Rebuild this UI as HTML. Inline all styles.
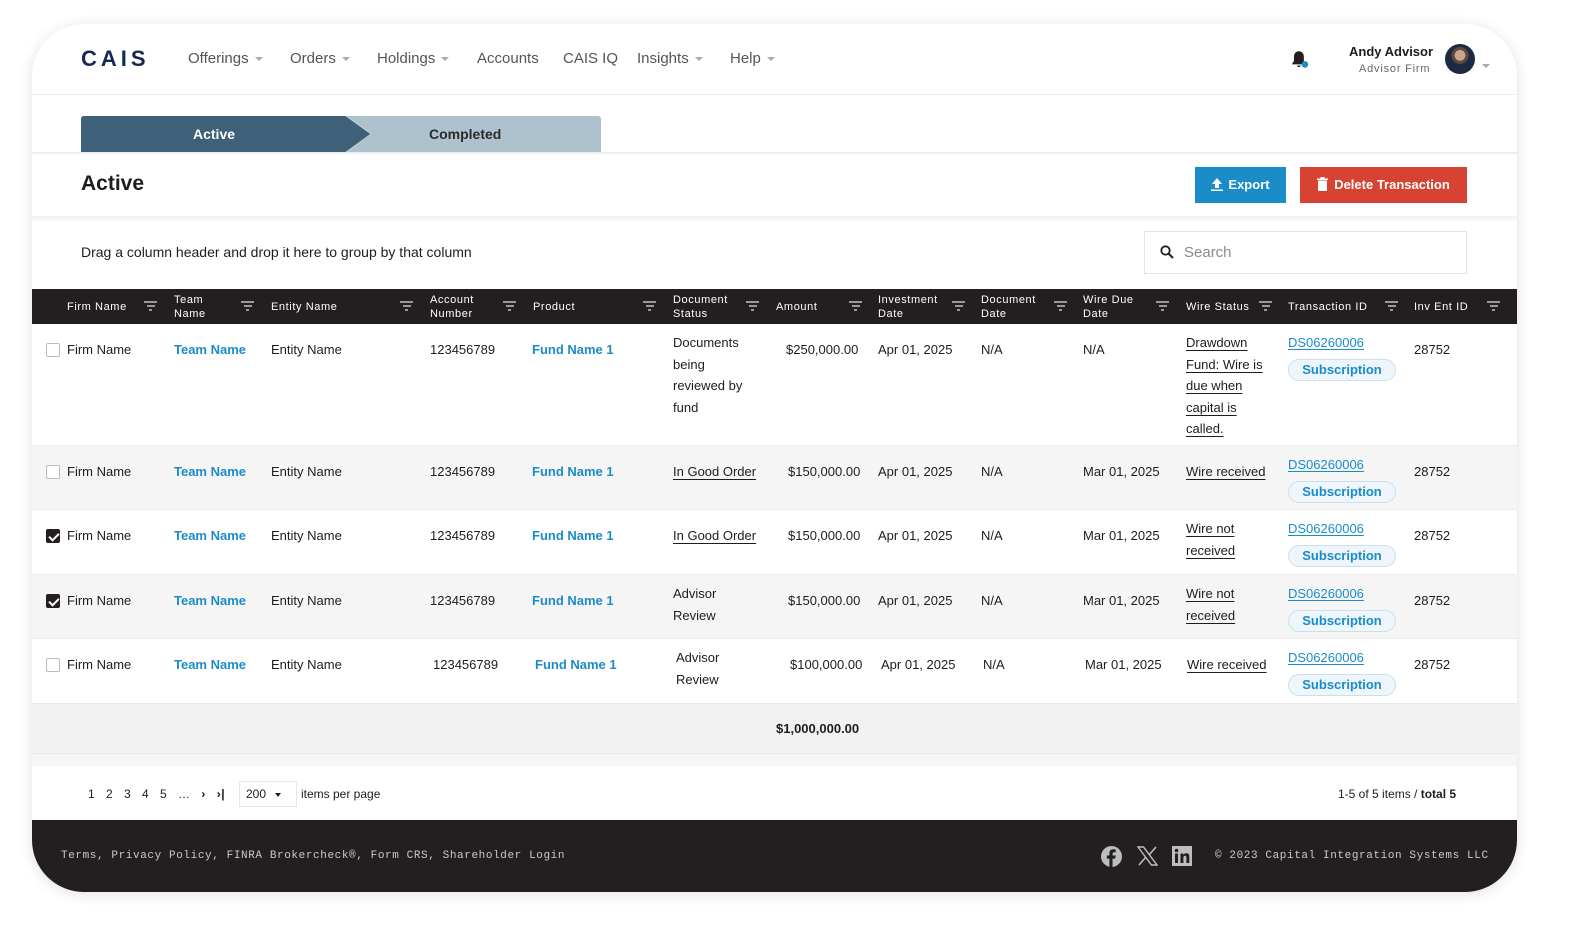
<!DOCTYPE html>
<html><head><meta charset="utf-8"><style>
*{box-sizing:border-box;margin:0;padding:0}
body{width:1591px;height:929px;background:#fff;font-family:"Liberation Sans",Arial,sans-serif;color:#1d1d1f;position:relative;overflow:hidden;font-size:13px}
.card{position:absolute;left:32px;top:24px;width:1485px;height:868px;border-radius:52px;background:#fff;box-shadow:0 2px 14px rgba(0,0,0,.12);overflow:hidden}
.a{position:absolute;white-space:nowrap}
.nav{color:#555;font-size:15px;top:49px}
.caret{display:inline-block;width:0;height:0;border-left:4px solid transparent;border-right:4px solid transparent;border-top:4px solid #aaa;vertical-align:middle;margin-left:6px}
.hdr{position:absolute;left:0;top:265px;width:1485px;height:35px;background:#231f20;color:#fff;font-size:11px;letter-spacing:.6px}
.hdr .a{line-height:14px}
.f{position:absolute;width:13px;top:12px}
.f i{display:block;height:1.5px;background:#999;margin:0 auto 2.5px}
.row{position:absolute;left:0;width:1485px}
.row .a{line-height:21.5px}
.lk{color:#1a8dc9;font-weight:bold}
.u{text-decoration:underline;text-underline-offset:3px}
.tx{color:#1a8dc9;text-decoration:underline;text-underline-offset:2px}
.badge{position:absolute;width:108px;height:22px;border:1px solid #c9e0f0;background:#eef5fb;border-radius:11px;color:#1a8dc9;font-weight:bold;text-align:center;line-height:20px;font-size:13px}
.cb{position:absolute;left:14px;width:14px;height:14px;border:1px solid #bbb;border-radius:2px;background:#fff}
.cb.on{background:#231f20;border-color:#231f20}
.cb.on:after{content:"";position:absolute;left:4px;top:1px;width:4px;height:8px;border:solid #fff;border-width:0 2px 2px 0;transform:rotate(45deg)}
</style></head><body>
<div class="card">
  <div class="a" style="left:49px;top:22px;font-size:22px;font-weight:bold;letter-spacing:4px;color:#152a52">CAIS</div>
  <div class="a nav" style="left:156px;top:26px">Offerings<span class="caret"></span></div>
  <div class="a nav" style="left:258px;top:26px">Orders<span class="caret"></span></div>
  <div class="a nav" style="left:345px;top:26px">Holdings<span class="caret"></span></div>
  <div class="a nav" style="left:445px;top:26px">Accounts</div>
  <div class="a nav" style="left:531px;top:26px">CAIS IQ</div>
  <div class="a nav" style="left:605px;top:26px">Insights<span class="caret"></span></div>
  <div class="a nav" style="left:698px;top:26px">Help<span class="caret"></span></div>
  <svg class="a" style="left:1257px;top:25px" width="22" height="22" viewBox="0 0 20 20"><path d="M9 2c-3 0-4.5 2.5-4.5 5v4L3 13v1h12v-1l-1.5-2V7C13.5 4.5 12 2 9 2z M7.5 15a1.5 1.5 0 0 0 3 0z" fill="#231f20"/><circle cx="14.5" cy="14" r="3" fill="#1a8dc9"/></svg>
  <div class="a" style="left:1317px;top:20px;font-size:13px;font-weight:bold">Andy Advisor</div>
  <div class="a" style="left:1327px;top:39px;font-size:11px;color:#666;letter-spacing:.8px">Advisor Firm</div>
  <div class="a" style="left:1413px;top:20px;width:30px;height:30px;border-radius:50%;background:radial-gradient(circle at 50% 38%,#c9a58c 0 22%,#5a4a40 23% 35%,#1e2a44 36%)"></div>
  <div class="a" style="left:1450px;top:33px"><span class="caret" style="margin:0"></span></div>
  <div class="a" style="left:0;top:70px;width:1485px;height:1px;background:#eee"></div>
  <div class="a" style="left:49px;top:92px;width:520px;height:36px;background:#adc2cc;border-radius:3px 3px 0 0"></div>
  <svg class="a" style="left:49px;top:92px" width="300" height="36"><path d="M0 3Q0 0 3 0H265L290 18L265 36H0Z" fill="#3e6079"/><path d="M265 0L290 18L265 36" fill="none" stroke="#fff" stroke-width="1" opacity=".5"/></svg>
  <div class="a" style="left:161px;top:102px;color:#fff;font-weight:bold;font-size:14px">Active</div>
  <div class="a" style="left:397px;top:102px;color:#2b2b2b;font-weight:bold;font-size:14px">Completed</div>
  <div class="a" style="left:0;top:128px;width:1485px;height:2px;background:#eee"></div>
  <div class="a" style="left:49px;top:148px;font-size:21px;font-weight:bold">Active</div>
  <div class="a" style="left:1163px;top:143px;width:91px;height:36px;background:#1a8dc9;color:#fff;font-weight:bold;font-size:13px;line-height:36px;text-align:center">
    <svg width="12" height="13" viewBox="0 0 12 13" style="vertical-align:-2px;margin-right:5px"><path d="M6 0L11 6H8V10H4V6H1Z M0 11.5H12V13H0Z" fill="#fff"/></svg>Export</div>
  <div class="a" style="left:1268px;top:143px;width:167px;height:36px;background:#d64333;color:#fff;font-weight:bold;font-size:13px;line-height:36px;text-align:center">
    <svg width="11" height="14" viewBox="0 0 11 14" style="vertical-align:-2px;margin-right:6px"><path d="M0 1.5H11V3H0Z M3.5 0H7.5V1.5H3.5Z M1 3.5H10V14H1Z" fill="#fff"/></svg>Delete Transaction</div>
  <div class="a" style="left:0;top:192px;width:1485px;height:6px;background:linear-gradient(#f0f0f0,#fff)"></div>
  <div class="a" style="left:49px;top:220px;font-size:14px">Drag a column header and drop it here to group by that column</div>
  <div class="a" style="left:1112px;top:207px;width:323px;height:43px;border:1px solid #e3e3e3;background:#fff"></div>
  <svg class="a" style="left:1128px;top:221px" width="14" height="14" viewBox="0 0 14 14"><circle cx="5.5" cy="5.5" r="4.2" fill="none" stroke="#231f20" stroke-width="1.8"/><path d="M8.5 8.5L13 13" stroke="#231f20" stroke-width="2"/></svg>
  <div class="a" style="left:1152px;top:220px;font-size:15px;color:#8a8a8a">Search</div>

  <div class="hdr">
    <div class="a" style="left:35px;top:11px">Firm Name</div><div class="f" style="left:112px"><i style="width:13px"></i><i style="width:8px"></i><i style="width:3px"></i></div>
    <div class="a" style="left:142px;top:4px">Team<br>Name</div><div class="f" style="left:209px"><i style="width:13px"></i><i style="width:8px"></i><i style="width:3px"></i></div>
    <div class="a" style="left:239px;top:11px">Entity Name</div><div class="f" style="left:368px"><i style="width:13px"></i><i style="width:8px"></i><i style="width:3px"></i></div>
    <div class="a" style="left:398px;top:4px">Account<br>Number</div><div class="f" style="left:471px"><i style="width:13px"></i><i style="width:8px"></i><i style="width:3px"></i></div>
    <div class="a" style="left:501px;top:11px">Product</div><div class="f" style="left:611px"><i style="width:13px"></i><i style="width:8px"></i><i style="width:3px"></i></div>
    <div class="a" style="left:641px;top:4px">Document<br>Status</div><div class="f" style="left:714px"><i style="width:13px"></i><i style="width:8px"></i><i style="width:3px"></i></div>
    <div class="a" style="left:744px;top:11px">Amount</div><div class="f" style="left:817px"><i style="width:13px"></i><i style="width:8px"></i><i style="width:3px"></i></div>
    <div class="a" style="left:846px;top:4px">Investment<br>Date</div><div class="f" style="left:920px"><i style="width:13px"></i><i style="width:8px"></i><i style="width:3px"></i></div>
    <div class="a" style="left:949px;top:4px">Document<br>Date</div><div class="f" style="left:1022px"><i style="width:13px"></i><i style="width:8px"></i><i style="width:3px"></i></div>
    <div class="a" style="left:1051px;top:4px">Wire Due<br>Date</div><div class="f" style="left:1124px"><i style="width:13px"></i><i style="width:8px"></i><i style="width:3px"></i></div>
    <div class="a" style="left:1154px;top:11px">Wire Status</div><div class="f" style="left:1227px"><i style="width:13px"></i><i style="width:8px"></i><i style="width:3px"></i></div>
    <div class="a" style="left:1256px;top:11px">Transaction ID</div><div class="f" style="left:1353px"><i style="width:13px"></i><i style="width:8px"></i><i style="width:3px"></i></div>
    <div class="a" style="left:1382px;top:11px">Inv Ent ID</div><div class="f" style="left:1455px"><i style="width:13px"></i><i style="width:8px"></i><i style="width:3px"></i></div>
  </div>

  <div class="row" style="top:300px;height:122px;background:#fff;border-bottom:1px solid #ececec">
    <div class="cb" style="top:19px"></div>
    <div class="a" style="left:35px;top:15px">Firm Name</div>
    <div class="a lk" style="left:142px;top:15px">Team Name</div>
    <div class="a" style="left:239px;top:15px">Entity Name</div>
    <div class="a" style="left:398px;top:15px">123456789</div>
    <div class="a lk" style="left:500px;top:15px">Fund Name 1</div>
    <div class="a" style="left:641px;top:8px">Documents<br>being<br>reviewed by<br>fund</div>
    <div class="a" style="left:754px;top:15px">$250,000.00</div>
    <div class="a" style="left:846px;top:15px">Apr 01, 2025</div>
    <div class="a" style="left:949px;top:15px">N/A</div>
    <div class="a" style="left:1051px;top:15px">N/A</div>
    <div class="a u" style="left:1154px;top:8px">Drawdown<br>Fund: Wire is<br>due when<br>capital is<br>called.</div>
    <div class="a tx" style="left:1256px;top:8px">DS06260006</div>
    <div class="badge" style="left:1256px;top:35px">Subscription</div>
    <div class="a" style="left:1382px;top:15px">28752</div>
  </div>
  <div class="row" style="top:422px;height:64px;background:#f5f5f5;border-bottom:1px solid #ececec">
    <div class="cb" style="top:19px"></div>
    <div class="a" style="left:35px;top:15px">Firm Name</div>
    <div class="a lk" style="left:142px;top:15px">Team Name</div>
    <div class="a" style="left:239px;top:15px">Entity Name</div>
    <div class="a" style="left:398px;top:15px">123456789</div>
    <div class="a lk" style="left:500px;top:15px">Fund Name 1</div>
    <div class="a u" style="left:641px;top:15px">In Good Order</div>
    <div class="a" style="left:756px;top:15px">$150,000.00</div>
    <div class="a" style="left:846px;top:15px">Apr 01, 2025</div>
    <div class="a" style="left:949px;top:15px">N/A</div>
    <div class="a" style="left:1051px;top:15px">Mar 01, 2025</div>
    <div class="a u" style="left:1154px;top:15px">Wire received</div>
    <div class="a tx" style="left:1256px;top:8px">DS06260006</div>
    <div class="badge" style="left:1256px;top:35px">Subscription</div>
    <div class="a" style="left:1382px;top:15px">28752</div>
  </div>
  <div class="row" style="top:486px;height:65px;background:#fff;border-bottom:1px solid #ececec">
    <div class="cb on" style="top:19px"></div>
    <div class="a" style="left:35px;top:15px">Firm Name</div>
    <div class="a lk" style="left:142px;top:15px">Team Name</div>
    <div class="a" style="left:239px;top:15px">Entity Name</div>
    <div class="a" style="left:398px;top:15px">123456789</div>
    <div class="a lk" style="left:500px;top:15px">Fund Name 1</div>
    <div class="a u" style="left:641px;top:15px">In Good Order</div>
    <div class="a" style="left:756px;top:15px">$150,000.00</div>
    <div class="a" style="left:846px;top:15px">Apr 01, 2025</div>
    <div class="a" style="left:949px;top:15px">N/A</div>
    <div class="a" style="left:1051px;top:15px">Mar 01, 2025</div>
    <div class="a u" style="left:1154px;top:8px">Wire not<br>received</div>
    <div class="a tx" style="left:1256px;top:8px">DS06260006</div>
    <div class="badge" style="left:1256px;top:35px">Subscription</div>
    <div class="a" style="left:1382px;top:15px">28752</div>
  </div>
  <div class="row" style="top:551px;height:64px;background:#f5f5f5;border-bottom:1px solid #ececec">
    <div class="cb on" style="top:19px"></div>
    <div class="a" style="left:35px;top:15px">Firm Name</div>
    <div class="a lk" style="left:142px;top:15px">Team Name</div>
    <div class="a" style="left:239px;top:15px">Entity Name</div>
    <div class="a" style="left:398px;top:15px">123456789</div>
    <div class="a lk" style="left:500px;top:15px">Fund Name 1</div>
    <div class="a" style="left:641px;top:8px">Advisor<br>Review</div>
    <div class="a" style="left:756px;top:15px">$150,000.00</div>
    <div class="a" style="left:846px;top:15px">Apr 01, 2025</div>
    <div class="a" style="left:949px;top:15px">N/A</div>
    <div class="a" style="left:1051px;top:15px">Mar 01, 2025</div>
    <div class="a u" style="left:1154px;top:8px">Wire not<br>received</div>
    <div class="a tx" style="left:1256px;top:8px">DS06260006</div>
    <div class="badge" style="left:1256px;top:35px">Subscription</div>
    <div class="a" style="left:1382px;top:15px">28752</div>
  </div>
  <div class="row" style="top:615px;height:64px;background:#fff">
    <div class="cb" style="top:19px"></div>
    <div class="a" style="left:35px;top:15px">Firm Name</div>
    <div class="a lk" style="left:142px;top:15px">Team Name</div>
    <div class="a" style="left:239px;top:15px">Entity Name</div>
    <div class="a" style="left:401px;top:15px">123456789</div>
    <div class="a lk" style="left:503px;top:15px">Fund Name 1</div>
    <div class="a" style="left:644px;top:8px">Advisor<br>Review</div>
    <div class="a" style="left:758px;top:15px">$100,000.00</div>
    <div class="a" style="left:849px;top:15px">Apr 01, 2025</div>
    <div class="a" style="left:951px;top:15px">N/A</div>
    <div class="a" style="left:1053px;top:15px">Mar 01, 2025</div>
    <div class="a u" style="left:1155px;top:15px">Wire received</div>
    <div class="a tx" style="left:1256px;top:8px">DS06260006</div>
    <div class="badge" style="left:1256px;top:35px">Subscription</div>
    <div class="a" style="left:1382px;top:15px">28752</div>
  </div>
  <div class="a" style="left:0;top:679px;width:1485px;height:51px;background:#f2f2f2;border-top:1px solid #e8e8e8;border-bottom:1px solid #e8e8e8"></div>
  <div class="a" style="left:744px;top:697px;font-weight:bold;font-size:13px">$1,000,000.00</div>
  <div class="a" style="left:0;top:730px;width:1485px;height:12px;background:#f6f6f6"></div>
  <div class="a" style="left:56px;top:763px;font-size:12px;word-spacing:7px;letter-spacing:.5px">1 2 3 4 5 … <b>›</b> <b>›|</b></div>
  <div class="a" style="left:207px;top:757px;width:58px;height:26px;border:1px solid #e6e6e6;font-size:12px;line-height:24px;padding-left:6px">200 <span style="display:inline-block;border-left:3.5px solid transparent;border-right:3.5px solid transparent;border-top:4px solid #231f20;vertical-align:middle;margin-left:6px"></span></div>
  <div class="a" style="left:269px;top:763px;font-size:12px">items per page</div>
  <div class="a" style="left:1306px;top:763px;font-size:12px">1-5 of 5 items / <b>total 5</b></div>
  <div class="a" style="left:0;top:796px;width:1485px;height:72px;background:#231f20"></div>
  <div class="a" style="left:29px;top:826px;font-family:'Liberation Mono',monospace;font-size:11px;color:#c9c9c9;letter-spacing:.6px">Terms, Privacy Policy, FINRA Brokercheck®, Form CRS, Shareholder Login</div>
  <svg class="a" style="left:1069px;top:822px" width="21" height="21" viewBox="0 0 20 20"><circle cx="10" cy="10" r="10" fill="#bdbdbd"/><path d="M11 20V12H13.5L14 9H11V7.5C11 6.6 11.3 6 12.6 6H14V3.3C13.6 3.2 12.6 3.1 11.6 3.1 9.4 3.1 8 4.4 8 6.9V9H5.6V12H8V20Z" fill="#231f20"/></svg>
  <svg class="a" style="left:1105px;top:822px" width="21" height="20" viewBox="0 0 21 20"><path d="M1 1H6.5L20 19H14.5Z" fill="none" stroke="#bdbdbd" stroke-width="1.4"/><path d="M19 1L12 9M2 19L9 11" stroke="#bdbdbd" stroke-width="1.6"/></svg>
  <svg class="a" style="left:1140px;top:822px" width="20" height="20" viewBox="0 0 20 20"><rect width="20" height="20" fill="#bdbdbd"/><rect x="3" y="7.5" width="3" height="9.5" fill="#231f20"/><circle cx="4.5" cy="4.5" r="1.8" fill="#231f20"/><path d="M8.5 7.5H11.3V9C11.8 8 13 7.3 14.4 7.3 16.5 7.3 17.3 8.6 17.3 11V17H14.4V11.7C14.4 10.5 14 9.8 13 9.8 12 9.8 11.4 10.5 11.4 11.7V17H8.5Z" fill="#231f20"/></svg>
  <div class="a" style="left:1183px;top:826px;font-family:'Liberation Mono',monospace;font-size:11px;color:#c9c9c9;letter-spacing:.6px">© 2023 Capital Integration Systems LLC</div>
</div>
</body></html>
